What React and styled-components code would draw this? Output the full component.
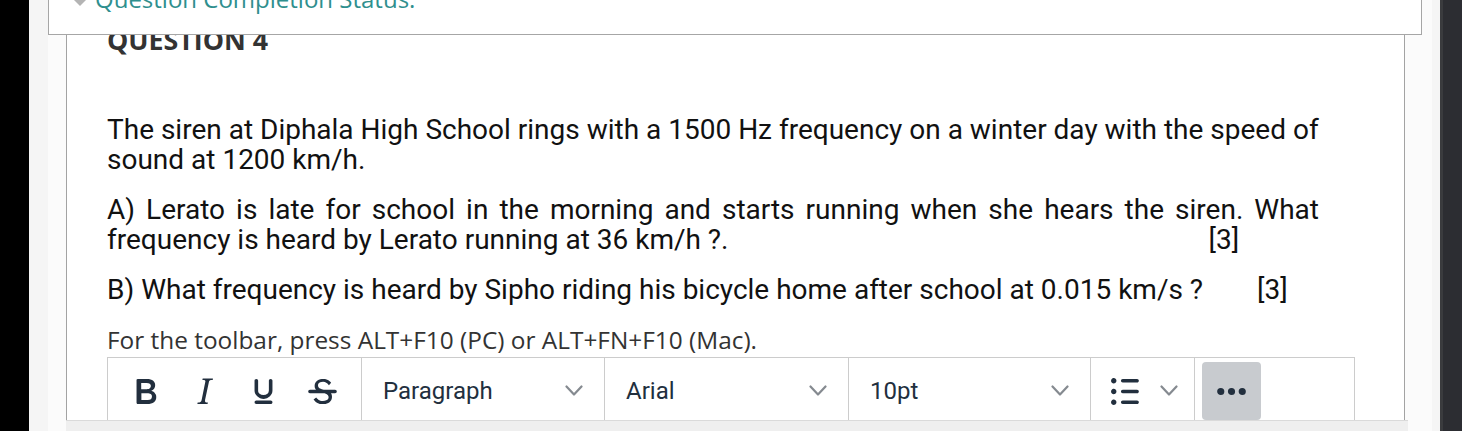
import React from 'react';
import styled, { createGlobalStyle } from 'styled-components';

const GlobalStyle = createGlobalStyle`
  html, body {
    margin: 0;
    padding: 0;
    background: #f5f5f5;
  }
  body {
    font-family: 'Open Sans', sans-serif;
  }
`;

const Shell = styled.div`
  display: flex;
  width: 1462px;
  height: 431px;
  overflow: hidden;
`;

const Rail = styled.div`
  flex: none;
  width: 29px;
  background: #000;
`;

const Stage = styled.div`
  position: relative;
  flex: 1;
  display: flex;
  padding: 0 8px 0 19px;
  background: #f5f5f5;
`;

const Column = styled.div`
  flex: 1;
  display: flex;
  flex-direction: column;
  padding-left: 18px;
  background: #fbfbfb;
`;

const Card = styled.section`
  flex: none;
  box-sizing: border-box;
  width: 1339px;
  height: 420px;
  padding: 25px 0 0 40px;
  border-left: 1px solid #a3a3a3;
  border-right: 1px solid #a3a3a3;
  background: #fff;
  overflow: hidden;
`;

const BottomBar = styled.div`
  flex: 1;
  width: 1342px;
  background: #efefef;
  border-top: 1px solid #dadada;
`;

const StatusPanel = styled.div`
  position: absolute;
  top: 0;
  left: 19px;
  box-sizing: border-box;
  width: 1374px;
  height: 35px;
  background: #fff;
  border: 1px solid #a6a6a6;
  border-top: none;
  overflow: hidden;
`;

const StatusRow = styled.div`
  display: flex;
  align-items: center;
  gap: 7px;
  margin: -16px 0 0 23px;
  font: 400 24px/30px 'Open Sans', sans-serif;
  color: #2f8f8e;
`;

const Heading = styled.h2`
  margin: 0;
  font: 700 26.8px/30px 'Open Sans', sans-serif;
  color: #333;
`;

const Body = styled.p`
  margin: ${(p) => p.$top}px 0 0;
  width: 1212px;
  font: 400 28px/30px Roboto, sans-serif;
  color: #111;
  text-align: ${(p) => (p.$justify ? 'justify' : 'left')};
`;

const Mark = styled.span`
  display: inline-block;
  margin-left: ${(p) => p.$gap}px;
`;

const Hint = styled.p`
  margin: 20px 0 0;
  font: 400 24.4px/30px 'Open Sans', sans-serif;
  color: #333;
`;

const Toolbar = styled.div`
  display: flex;
  box-sizing: border-box;
  width: 1248px;
  height: 80px;
  margin-top: 2px;
  border: 1px solid #cccccc;
  background: #fff;
`;

const Group = styled.div`
  flex: none;
  display: flex;
  align-items: flex-start;
  box-sizing: border-box;
  width: ${(p) => p.$width}px;
  padding: 4px 0 0 ${(p) => p.$pl}px;
  border-right: ${(p) => (p.$last ? 'none' : '1px solid #cccccc')};
`;

const IconButton = styled.div`
  display: flex;
  align-items: center;
  justify-content: center;
  width: 59px;
  height: 58px;
  border-radius: 4px;
  background: ${(p) => (p.$active ? '#c8cbcf' : 'transparent')};
  color: #222f3e;
`;

const Select = styled.div`
  flex: 1;
  display: flex;
  align-items: center;
  justify-content: space-between;
  height: 58px;
  padding-right: 21px;
  font: 400 24px/1 Roboto, sans-serif;
  color: #222f3e;
`;

const SplitButton = styled.div`
  display: flex;
  align-items: center;
  gap: 14px;
  height: 58px;
  color: #222f3e;
`;

const Icon = ({ d, size = 43 }) => (
  <svg width={size} height={size} viewBox="0 0 24 24" fill="currentColor">
    <path d={d} />
  </svg>
);

const Chevron = () => (
  <svg width="18" height="12" viewBox="0 0 18 12" fill="none">
    <polyline points="1.5,1.5 9,9.5 16.5,1.5" stroke="#858a90" strokeWidth="2.2" strokeLinecap="round" strokeLinejoin="round" />
  </svg>
);

const Diamond = () => (
  <svg width="16" height="16" viewBox="0 0 16 16">
    <path d="M8 1 L15 8 L8 15 L1 8 Z" fill="#b4b4b4" />
  </svg>
);

const ICONS = {
  bold: 'M7.8 19c-.3 0-.5 0-.6-.2l-.2-.5V5.7c0-.2 0-.4.2-.5l.6-.2h5c1.5 0 2.7.3 3.5 1 .7.6 1.1 1.4 1.1 2.5a3 3 0 01-.6 1.9c-.4.6-1 1-1.6 1.2.4.1.9.3 1.3.6s.8.7 1 1.2c.4.4.5 1 .5 1.6 0 1.3-.4 2.3-1.3 3-.8.7-2.1 1-3.8 1H7.8zm5-8.3c.6 0 1.2-.1 1.6-.5.4-.3.6-.7.6-1.3 0-1.1-.8-1.7-2.4-1.7H9.6v3.5h3.1zm.5 6c.7 0 1.3-.1 1.7-.4.4-.4.6-.9.6-1.5s-.2-1-.7-1.4c-.4-.3-1-.4-2-.4H9.7v3.8h3.5z',
  italic: 'M16.7 4.7l-.1.9h-.3c-.6 0-1 0-1.4.3-.3.3-.4.6-.5 1.1l-2.1 9.8v.6c0 .5.4.8 1.4.8h.2l-.2.8H8l.2-.8h.2c1.1 0 1.8-.5 2-1.5l2-9.8.1-.5c0-.6-.4-.8-1.4-.8h-.3l.2-.9h5.8z',
  underline: 'M16 5c.6 0 1 .4 1 1v5.5a4 4 0 01-.4 1.8l-1 1.4a5.3 5.3 0 01-5.5 1 5 5 0 01-1.6-1c-.5-.4-.8-.9-1.1-1.4a4 4 0 01-.4-1.8V6c0-.6.4-1 1-1s1 .4 1 1v5.5c0 .3 0 .6.2 1l.6.7a3.3 3.3 0 002.2.8 3.4 3.4 0 002.2-.8c.3-.2.5-.5.6-.8l.2-.9V6c0-.6.4-1 1-1zM8 17h8c.6 0 1 .4 1 1s-.4 1-1 1H8a1 1 0 010-2z',
  strike: 'M15.6 8.5c-.5-.7-1-1.1-1.3-1.3-.6-.4-1.3-.6-2-.6-2.7 0-2.8 1.7-2.8 2.1 0 1.6 1.8 2 3.2 2.3 4.4.9 4.6 2.8 4.6 3.9 0 1.4-.7 4.1-5 4.1A6.2 6.2 0 017 16.4l1.5-1.1c.4.6 1.6 2 3.7 2 1.6 0 2.5-.4 3-1.2.4-.8.3-2-.8-2.6-.7-.4-1.6-.7-2.9-1-1-.2-3.9-.8-3.9-3.6C7.6 6 10.3 5 12.4 5c2.9 0 4 1.6 4.4 2.1l-1.2 1.4zM5 11h14a1 1 0 010 2H5a1 1 0 010-2z',
  list: 'M11 5h8c.6 0 1 .4 1 1s-.4 1-1 1h-8a1 1 0 010-2zm0 6h8c.6 0 1 .4 1 1s-.4 1-1 1h-8a1 1 0 010-2zm0 6h8c.6 0 1 .4 1 1s-.4 1-1 1h-8a1 1 0 010-2zM4.5 6c0-.4.1-.8.4-1 .3-.4.7-.5 1.1-.5.4 0 .8.1 1 .4.4.3.5.7.5 1.1 0 .4-.1.8-.4 1-.3.4-.7.5-1.1.5-.4 0-.8-.1-1-.4-.4-.3-.5-.7-.5-1.1zm0 6c0-.4.1-.8.4-1 .3-.4.7-.5 1.1-.5.4 0 .8.1 1 .4.4.3.5.7.5 1.1 0 .4-.1.8-.4 1-.3.4-.7.5-1.1.5-.4 0-.8-.1-1-.4-.4-.3-.5-.7-.5-1.1zm0 6c0-.4.1-.8.4-1 .3-.4.7-.5 1.1-.5.4 0 .8.1 1 .4.4.3.5.7.5 1.1 0 .4-.1.8-.4 1-.3.4-.7.5-1.1.5-.4 0-.8-.1-1-.4-.4-.3-.5-.7-.5-1.1z',
  more: 'M6 10a2 2 0 00-2 2c0 1.1.9 2 2 2a2 2 0 002-2 2 2 0 00-2-2zm12 0a2 2 0 00-2 2c0 1.1.9 2 2 2a2 2 0 002-2 2 2 0 00-2-2zm-6 0a2 2 0 00-2 2c0 1.1.9 2 2 2a2 2 0 002-2 2 2 0 00-2-2z',
};

const Scroll = styled.div`
  flex: none;
  width: 22px;
  box-sizing: border-box;
  background: #2c2d32;
  border-left: 3px solid #3a3b3e;
`;

const selects = [
  { label: 'Paragraph', width: 243 },
  { label: 'Arial', width: 244 },
  { label: '10pt', width: 242 },
];

export default function App() {
  return (
    <>
      <GlobalStyle />
      <Shell>
        <Rail />
        <Stage>
          <Column>
            <Card>
              <Heading>QUESTION 4</Heading>
              <Body $top={60}>
                The siren at Diphala High School rings with a 1500 Hz frequency on a winter day with the speed of sound at 1200 km/h.
              </Body>
              <Body $top={20} $justify>
                A) Lerato is late for school in the morning and starts running when she hears the siren. What frequency is heard by Lerato running at 36 km/h ?.
                <Mark $gap={480}>[3]</Mark>
              </Body>
              <Body $top={20}>
                B) What frequency is heard by Sipho riding his bicycle home after school at 0.015 km/s ?
                <Mark $gap={54}>[3]</Mark>
              </Body>
              <Hint>For the toolbar, press ALT+F10 (PC) or ALT+FN+F10 (Mac).</Hint>
              <Toolbar>
                <Group $width={254} $pl={8}>
                  <IconButton><Icon d={ICONS.bold} /></IconButton>
                  <IconButton><Icon d={ICONS.italic} /></IconButton>
                  <IconButton><Icon d={ICONS.underline} /></IconButton>
                  <IconButton><Icon d={ICONS.strike} /></IconButton>
                </Group>
                {selects.map((s) => (
                  <Group key={s.label} $width={s.width} $pl={21}>
                    <Select>
                      <span>{s.label}</span>
                      <Chevron />
                    </Select>
                  </Group>
                ))}
                <Group $width={104} $pl={12}>
                  <SplitButton>
                    <Icon d={ICONS.list} />
                    <Chevron />
                  </SplitButton>
                </Group>
                <Group $width={150} $pl={7} $last>
                  <IconButton $active><Icon d={ICONS.more} /></IconButton>
                </Group>
              </Toolbar>
            </Card>
            <BottomBar />
          </Column>
          <StatusPanel>
            <StatusRow>
              <Diamond />
              <span>Question Completion Status:</span>
            </StatusRow>
          </StatusPanel>
        </Stage>
        <Scroll />
      </Shell>
    </>
  );
}
